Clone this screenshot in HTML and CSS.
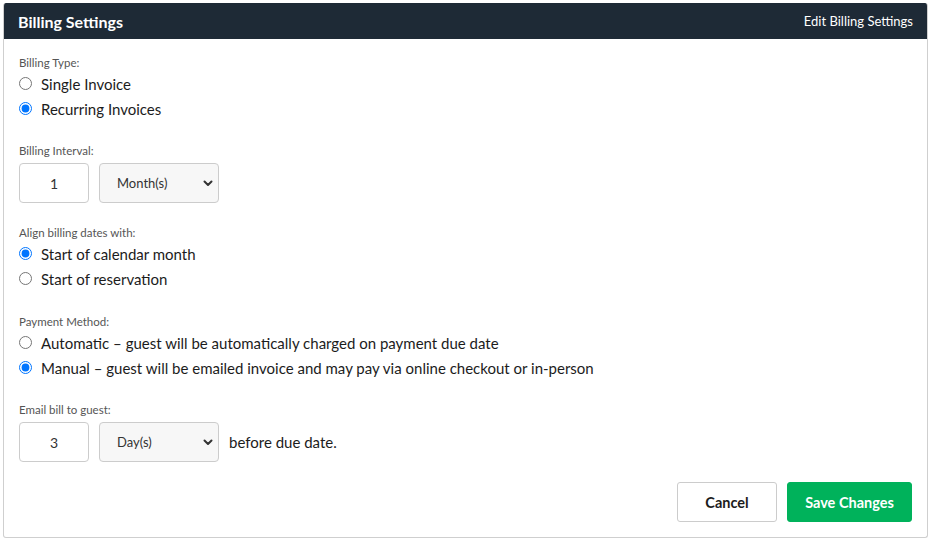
FILE: index.html
```html
<!DOCTYPE html>
<html lang="en">
<head>
<meta charset="utf-8">
<title>Billing Settings</title>
<link rel="stylesheet" href="styles.css">
</head>
<body>
<div class="card">
  <div class="card-header">
    <div class="card-title">Billing Settings</div>
    <div class="card-link">Edit Billing Settings</div>
  </div>
  <div class="card-body">
    <div class="section">
      <div class="field-label">Billing Type:</div>
      <label class="radio-row"><input type="radio" name="type"> <span>Single Invoice</span></label>
      <label class="radio-row"><input type="radio" name="type" checked> <span>Recurring Invoices</span></label>
    </div>
    <div class="section">
      <div class="field-label">Billing Interval:</div>
      <div class="input-row">
        <input class="num-input" type="text" value="1">
        <div class="select-wrap">
          <select class="select"><option>Month(s)</option></select>
          <svg class="chev" width="10" height="7" viewBox="0 0 10 7"><path d="M1.5 1.5 L5 5 L8.5 1.5" fill="none" stroke="#333" stroke-width="2" stroke-linecap="round" stroke-linejoin="round"/></svg>
        </div>
      </div>
    </div>
    <div class="section section-wide">
      <div class="field-label">Align billing dates with:</div>
      <label class="radio-row"><input type="radio" name="align" checked> <span>Start of calendar month</span></label>
      <label class="radio-row"><input type="radio" name="align"> <span>Start of reservation</span></label>
    </div>
    <div class="section">
      <div class="field-label">Payment Method:</div>
      <label class="radio-row"><input type="radio" name="pay"> <span>Automatic – guest will be automatically charged on payment due date</span></label>
      <label class="radio-row"><input type="radio" name="pay" checked> <span>Manual – guest will be emailed invoice and may pay via online checkout or in-person</span></label>
    </div>
    <div class="section section-last">
      <div class="field-label">Email bill to guest:</div>
      <div class="input-row">
        <input class="num-input" type="text" value="3">
        <div class="select-wrap">
          <select class="select"><option>Day(s)</option></select>
          <svg class="chev" width="10" height="7" viewBox="0 0 10 7"><path d="M1.5 1.5 L5 5 L8.5 1.5" fill="none" stroke="#333" stroke-width="2" stroke-linecap="round" stroke-linejoin="round"/></svg>
        </div>
        <span class="after-text">before due date.</span>
      </div>
    </div>
    <div class="actions">
      <button class="btn btn-cancel">Cancel</button>
      <button class="btn btn-save">Save Changes</button>
    </div>
  </div>
</div>
</body>
</html>
```

FILE: styles.css
```css
html, body {
  margin: 0;
  padding: 0;
  background: #ffffff;
}
body {
  padding: 3px;
  font-family: Lato, "Liberation Sans", Arial, sans-serif;
  color: #1c1c1c;
}
.card {
  width: 925px;
  height: 535px;
  box-sizing: border-box;
  border: 1px solid #cfcfcf;
  border-top: none;
  border-radius: 3px;
  display: flex;
  flex-direction: column;
  overflow: hidden;
}
.card-header {
  height: 36px;
  margin: 0 -1px;
  background: #1e2a36;
  color: #ffffff;
  display: flex;
  align-items: center;
  justify-content: space-between;
  padding: 0 15px;
  flex: none;
}
.card-title {
  font-size: 16px;
  font-weight: 700;
}
.card-link {
  font-size: 13px;
}
.card-body {
  flex: 1;
  padding: 16px 15px 15px;
  display: flex;
  flex-direction: column;
}
.section {
  margin-bottom: 22px;
  display: flex;
  flex-direction: column;
  flex: none;
}
.section-wide {
  margin-bottom: 23px;
}
.section-last {
  margin-bottom: 0;
}
.field-label {
  font-size: 11.5px;
  line-height: 16px;
  color: #555555;
}
.radio-row {
  display: flex;
  align-items: center;
  height: 25px;
  font-size: 15px;
  color: #1c1c1c;
  gap: 9px;
}
.radio-row input {
  margin: 0;
  width: 13px;
  height: 13px;
}
.input-row {
  display: flex;
  align-items: center;
  gap: 10px;
  margin-top: 4px;
}
.num-input {
  width: 70px;
  height: 40px;
  box-sizing: border-box;
  border: 1px solid #cccccc;
  border-radius: 4px;
  text-align: center;
  font-family: inherit;
  font-size: 14px;
  color: #333333;
  background: #ffffff;
  padding: 0;
}
.select-wrap {
  position: relative;
  width: 120px;
  height: 40px;
}
.select {
  -webkit-appearance: none;
  appearance: none;
  width: 120px;
  height: 40px;
  box-sizing: border-box;
  border: 1px solid #cccccc;
  border-radius: 4px;
  background: #f7f7f7;
  font-family: inherit;
  font-size: 13px;
  color: #333333;
  padding: 0 0 0 17px;
}
.chev {
  position: absolute;
  right: 6px;
  top: 17px;
}
.after-text {
  font-size: 15px;
  color: #1c1c1c;
}
.actions {
  margin-top: auto;
  display: flex;
  justify-content: flex-end;
  gap: 10px;
  flex: none;
}
.btn {
  height: 40px;
  border-radius: 3px;
  font-family: inherit;
  font-size: 14.5px;
  font-weight: 700;
  box-sizing: border-box;
  cursor: pointer;
}
.btn-cancel {
  width: 100px;
  background: #ffffff;
  border: 1px solid #cccccc;
  color: #1c1c1c;
}
.btn-save {
  width: 125px;
  background: #00b25b;
  border: 1px solid #00b25b;
  color: #ffffff;
}
```
